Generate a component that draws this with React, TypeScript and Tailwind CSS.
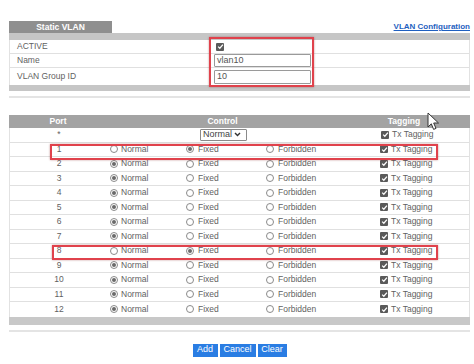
import React from "react";

const font = { fontFamily: '"Liberation Sans", Arial, sans-serif' };

function Radio({ on }: { on: boolean }) {
  return (
    <span className="inline-flex w-[8px] h-[8px] rounded-full border border-[#8a8a8a] bg-white items-center justify-center shrink-0">
      {on && <span className="w-[4px] h-[4px] rounded-full bg-[#6a6a6a]" />}
    </span>
  );
}

function Check() {
  return (
    <span className="inline-flex w-[8px] h-[8px] rounded-[1px] bg-[#5a5a5a] items-center justify-center shrink-0">
      <svg width="7" height="7" viewBox="0 0 8 8">
        <path d="M1.3 4.2 L3.2 6 L6.8 1.8" stroke="#fff" strokeWidth="1.4" fill="none" />
      </svg>
    </span>
  );
}

const rows = [
  { p: "1", c: 1 },
  { p: "2", c: 0 },
  { p: "3", c: 0 },
  { p: "4", c: 0 },
  { p: "5", c: 0 },
  { p: "6", c: 0 },
  { p: "7", c: 0 },
  { p: "8", c: 1 },
  { p: "9", c: 0 },
  { p: "10", c: 0 },
  { p: "11", c: 0 },
  { p: "12", c: 0 },
];

export default function App() {
  return (
    <div className="relative w-[474px] h-[364px] bg-white text-[#5f5f5f] text-[8.5px] overflow-hidden" style={font}>
      <div className="pl-[9px] pr-[4px] pt-[21px]">
        {/* title row */}
        <div className="flex items-end justify-between h-[12px]">
          <div className="w-[103px] h-[12px] bg-[#8f8f8f] text-white font-bold text-[8.5px] flex items-center justify-center">
            Static VLAN
          </div>
          <a className="text-[#1f5fc0] font-bold underline text-[8px] leading-[10px] mb-[1px]">VLAN Configuration</a>
        </div>
        <div className="h-[7px] bg-[#c6c6c6]" />
        <div className="border-l border-r border-[#e2e2e2]">
          <div className="flex h-[14px] items-center border-b border-[#e0e0e0]">
            <div className="w-[204px] pl-[7px]">ACTIVE</div>
            <div className="pl-[2px] pt-[2px]"><Check /></div>
          </div>
          <div className="flex h-[14px] items-center border-b border-[#e0e0e0]">
            <div className="w-[204px] pl-[7px]">Name</div>
            <div className="w-[97px] h-[13px] border border-[#9a9a9a] rounded-[1px] text-[#555] pl-[2px] flex items-center text-[9px]">vlan10</div>
          </div>
          <div className="flex h-[17px] items-center">
            <div className="w-[204px] pl-[7px]">VLAN Group ID</div>
            <div className="w-[97px] h-[14px] border border-[#9a9a9a] rounded-[1px] text-[#555] pl-[2px] flex items-center text-[9px]">10</div>
          </div>
        </div>
        <div className="h-[6px] bg-[#c6c6c6]" />
        <div className="mt-[5px] h-[2px] bg-[#e4e4e4]" />

        {/* ports table */}
        <div className="relative mt-[17px]">
          <div className="flex h-[13px] items-center bg-[#a3a3a3] text-white font-bold">
            <div className="w-[98px] text-center">Port</div>
            <div className="w-[231px] text-center">Control</div>
            <div className="flex-1 text-center">Tagging</div>
          </div>
          <div className="border-l border-r border-[#e2e2e2]">
            <div className="flex h-[14.5px] items-center border-b border-[#e0e0e0]">
              <div className="w-[98px] text-center">*</div>
              <div className="w-[231px] flex justify-center">
                <div className="h-[12px] w-[47px] border border-[#8a8a8a] rounded-[1px] flex items-center pl-[2px] text-[#444] text-[9px] gap-[2px]">
                  Normal
                  <svg width="7" height="5" viewBox="0 0 7 5"><path d="M1 1 L3.5 3.6 L6 1" stroke="#333" strokeWidth="1.4" fill="none" /></svg>
                </div>
              </div>
              <div className="flex items-center gap-[3px] pl-[42px]"><Check />Tx Tagging</div>
            </div>
            {rows.map((r) => (
              <div key={r.p} className="flex h-[14.5px] items-center border-b border-[#e0e0e0] last:border-b-0">
                <div className="w-[98px] text-center">{r.p}</div>
                <div className="w-[78px] flex items-center gap-[3px] pl-[2px]"><Radio on={r.c === 0} />Normal</div>
                <div className="w-[80px] flex items-center gap-[4px]"><Radio on={r.c === 1} />Fixed</div>
                <div className="w-[114px] flex items-center gap-[4px]"><Radio on={false} />Forbidden</div>
                <div className="flex items-center gap-[3px]"><Check />Tx Tagging</div>
              </div>
            ))}
          </div>
          <div className="h-[8px] bg-[#c8c8c8]" />
          <div className="mt-[5px] h-[2px] bg-[#e4e4e4]" />

          {/* red annotation boxes */}
          <div className="absolute left-[41px] top-[29px] w-[388px] h-[16px] border-2 border-[#e0424c] shadow-[0_0_2px_rgba(120,0,0,0.4)]" />
          <div className="absolute left-[43px] top-[130px] w-[386px] h-[15px] border-2 border-[#e0424c] shadow-[0_0_2px_rgba(120,0,0,0.4)]" />
        </div>

        <div className="flex justify-center gap-[2px] mt-[12px]">
          <div className="h-[13px] w-[25px] bg-[#2a7de3] text-white text-[9px] flex items-center justify-center">Add</div>
          <div className="h-[13px] w-[36px] bg-[#2a7de3] text-white text-[9px] flex items-center justify-center">Cancel</div>
          <div className="h-[13px] w-[29px] bg-[#2a7de3] text-white text-[9px] flex items-center justify-center">Clear</div>
        </div>
      </div>

      {/* top red box */}
      <div className="absolute left-[209px] top-[37px] w-[105px] h-[50px] border-2 border-[#e0424c] shadow-[0_0_2px_rgba(120,0,0,0.4)]" />

      {/* cursor */}
      <svg className="absolute left-[427px] top-[112px]" width="14" height="20" viewBox="0 0 14 20">
        <path d="M1 1 L1 15 L4.3 11.8 L6.6 17.4 L9 16.4 L6.7 11 L11.5 11 Z" fill="#fff" stroke="#333" strokeWidth="1" strokeLinejoin="round" />
      </svg>
    </div>
  );
}
